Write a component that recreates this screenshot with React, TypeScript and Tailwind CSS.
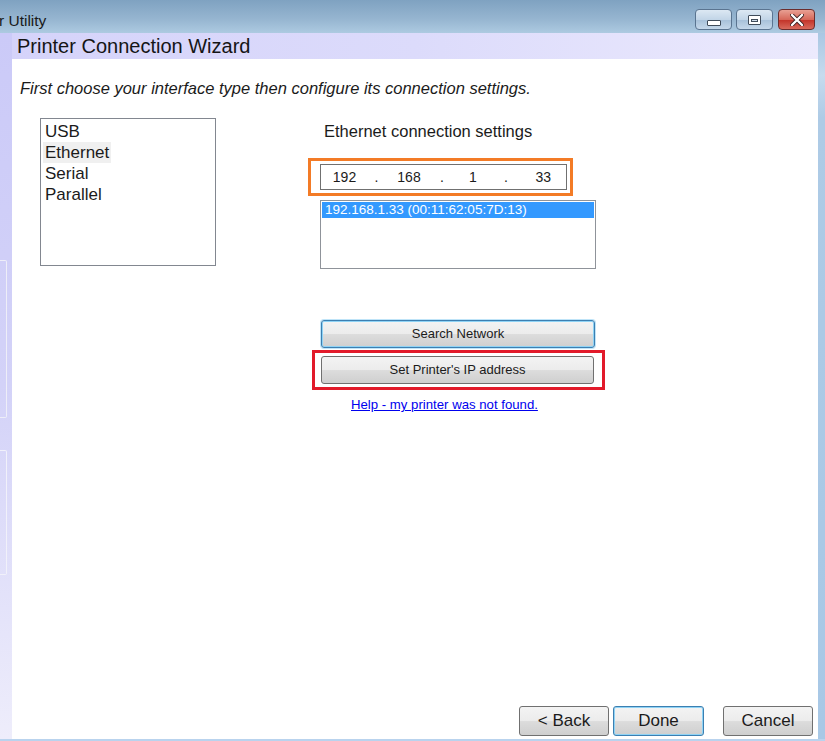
import React from 'react';

const btn =
  'flex items-center justify-center rounded-[3px] border text-[#1b1b1b] bg-[linear-gradient(to_bottom,#f3f3f3_0%,#ececec_48%,#dcdcdc_52%,#cfcfcf_100%)]';

const CaptionButton = ({ kind }: { kind: 'min' | 'max' | 'close' }) => {
  if (kind === 'close') {
    return (
      <div className="w-[37px] h-[21px] rounded-[4px] border border-[#6b2d2d] bg-[linear-gradient(to_bottom,#e8a093_0%,#d6685a_50%,#c4362b_55%,#d86a5c_100%)] flex items-center justify-center">
        <svg width="14" height="12" viewBox="0 0 14 12">
          <path d="M2 1 L12 11 M12 1 L2 11" stroke="#3b2020" strokeWidth="4" strokeLinecap="round" />
          <path d="M2 1 L12 11 M12 1 L2 11" stroke="#ffffff" strokeWidth="2.4" strokeLinecap="round" />
        </svg>
      </div>
    );
  }
  return (
    <div className="w-[37px] h-[21px] rounded-[4px] border border-[#5a7490] bg-[linear-gradient(to_bottom,#dce8f3_0%,#c2d5e7_50%,#a9c2da_55%,#c5d8ea_100%)] flex items-center justify-center">
      {kind === 'min' ? (
        <div className="mt-[6px] w-[14px] h-[6px] rounded-[1px] border border-[#404c5a] bg-white" />
      ) : (
        <div className="w-[13px] h-[10px] rounded-[1px] border border-[#404c5a] bg-white flex items-end justify-center pb-[2px]">
          <div className="w-[7px] h-[3px] border border-[#404c5a] bg-[#cfdbe8]" />
        </div>
      )}
    </div>
  );
};

export default function App() {
  return (
    <div className="w-[825px] h-[741px] flex flex-col overflow-hidden font-['Liberation_Sans',Arial,sans-serif] text-[#1b1b1b]">
      {/* title bar */}
      <div className="h-[33px] flex bg-[linear-gradient(to_bottom,#7fa2c1_0%,#97b6d1_60%,#adcae1_100%)]">
        <div className="text-[15.5px] leading-[33px] pt-[4px] -ml-[1px] text-[#1a1a1a]">r Utility</div>
        <div className="ml-auto mr-[10px] mt-[9px] flex">
          <CaptionButton kind="min" />
          <div className="ml-[4px]">
            <CaptionButton kind="max" />
          </div>
          <div className="ml-[5px]">
            <CaptionButton kind="close" />
          </div>
        </div>
      </div>

      <div className="flex-1 flex">
        {/* left strip */}
        <div className="w-[12px] flex flex-col bg-[linear-gradient(to_bottom,#cbcaf8_0%,#d3d2f8_50%,#eeedfb_100%)]">
          <div className="mt-[227px] h-[158px] w-[7px] border-y border-r border-[#eeeef8] rounded-r-[2px]" />
          <div className="mt-[32px] h-[125px] w-[7px] border-y border-r border-[#f1f1fa] rounded-r-[2px]" />
        </div>

        <div className="flex-1 flex flex-col">
          {/* header */}
          <div className="h-[26px] pl-[5px] text-[20px] leading-[26px] text-[#151515] bg-[linear-gradient(to_right,#d5d3fa_0%,#dcdbfb_50%,#eceafd_100%)]">
            Printer Connection Wizard
          </div>

          {/* content */}
          <div className="flex-1 bg-white flex flex-col">
            <p className="mt-[20px] ml-[8px] text-[16.5px] leading-[19px] italic text-[#1b1b1b]">
              First choose your interface type then configure its connection settings.
            </p>

            <div className="mt-[20px] flex">
              <div className="ml-[28px] w-[176px] h-[148px] border border-[#828790] pt-[2px] px-[2px] text-[17px] leading-[21px]">
                <div className="px-[2px]">USB</div>
                <div className="px-[2px] bg-[#f0f0f0] w-fit">Ethernet</div>
                <div className="px-[2px]">Serial</div>
                <div className="px-[2px]">Parallel</div>
              </div>

              <div className="ml-[92px] flex flex-col items-start">
                <div className="ml-[16px] mt-[4px] text-[16.5px] leading-[19px]">Ethernet connection settings</div>

                <div className="mt-[17px] w-[265px] h-[38px] border-[3px] border-[#f37b26] pl-[9px] pr-[3px] py-[3px]">
                  <div className="h-[26px] border border-[#707070] flex items-center text-[14px] leading-[16px]">
                    <span className="w-[47px] text-center">192</span>
                    <span className="w-[17px] text-center">.</span>
                    <span className="w-[48px] text-center">168</span>
                    <span className="w-[18px] text-center">.</span>
                    <span className="w-[44px] text-center">1</span>
                    <span className="w-[22px] text-center">.</span>
                    <span className="flex-1 text-right pr-[15px]">33</span>
                  </div>
                </div>

                <div className="mt-[4px] ml-[12px] w-[276px] h-[69px] border border-[#8f939a] p-[1px]">
                  <div className="h-[16px] bg-[#3399ff] text-white text-[13.5px] leading-[16px] pl-[3px]">
                    192.168.1.33 (00:11:62:05:7D:13)
                  </div>
                </div>

                <div className={`${btn} mt-[51px] ml-[13px] w-[274px] h-[28px] border-[#3c7fb1] shadow-[inset_0_0_0_1px_#8fd3f5,0_0_0_1px_#bfe4f8] text-[13px]`}>
                  Search Network
                </div>

                <div className="mt-[2px] ml-[4px] w-[293px] h-[40px] border-[3px] border-[#e21a2a] pl-[6px] pt-[3px]">
                  <div className={`${btn} w-[273px] h-[28px] border-[#707070] text-[13px]`}>Set Printer's IP address</div>
                </div>

                <a href="#" className="mt-[7px] ml-[43px] text-[13.2px] leading-[16px] text-[#0000ee] underline">
                  Help - my printer was not found.
                </a>
              </div>
            </div>

            <div className="mt-auto mb-[3px] mr-[5px] flex justify-end">
              <div className={`${btn} w-[90px] h-[30px] border-[#707070] text-[17px]`}>&lt; Back</div>
              <div className={`${btn} ml-[4px] w-[91px] h-[30px] border-[#3c7fb1] shadow-[inset_0_0_0_1px_#8fd3f5] text-[17px]`}>
                Done
              </div>
              <div className={`${btn} ml-[19px] w-[90px] h-[30px] border-[#707070] text-[17px]`}>Cancel</div>
            </div>
          </div>
        </div>

        {/* right strip */}
        <div className="w-[7px] bg-[linear-gradient(to_bottom,#a9c7e3_0%,#c6dbee_6%,#aecbe6_12%,#a8c8e6_100%)]" />
      </div>
      <div className="h-[2px] bg-[#b9d3ee]" />
    </div>
  );
}
